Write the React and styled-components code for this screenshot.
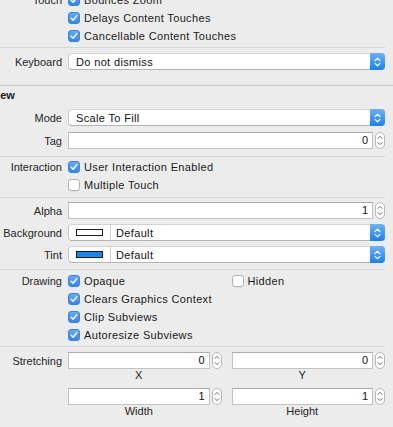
import React from 'react';
import styled, { createGlobalStyle } from 'styled-components';

const Global = createGlobalStyle`
  html, body { margin: 0; padding: 0; background: #ececec; overflow: hidden; }
  body {
    font-family: "Liberation Sans", Arial, sans-serif;
    font-size: 11px;
    color: #1f1f1f;
    -webkit-font-smoothing: antialiased;
  }
`;

const Panel = styled.div`
  width: 393px;
  margin-top: -9px;
  display: flex;
  flex-direction: column;
`;

const Row = styled.div`
  display: grid;
  grid-template-columns: 62px 1fr;
  column-gap: 6px;
  align-items: center;
  height: ${(p) => p.$h || 18}px;
  margin-top: ${(p) => p.$mt || 0}px;
  padding-right: 8px;
`;

const Label = styled.div`
  text-align: right;
  white-space: nowrap;
  color: #262626;
`;

const Divider = styled.div`
  height: 1px;
  background: ${(p) => (p.$full ? '#c9c9c9' : '#d6d6d6')};
  margin-top: ${(p) => p.$mt || 0}px;
  margin-right: ${(p) => (p.$full ? 0 : 8)}px;
`;

const Header = styled.div`
  height: 14px;
  line-height: 14px;
  margin-top: 2px;
  margin-left: -10px;
  font-weight: bold;
  color: #1a1a1a;
`;

const CheckWrap = styled.label`
  display: flex;
  align-items: center;
  gap: 4px;
  white-space: nowrap;
  color: #1a1a1a;
  letter-spacing: 0.35px;
`;

const Box = styled.span`
  width: 12px;
  height: 12px;
  box-sizing: border-box;
  border-radius: 3px;
  display: flex;
  align-items: center;
  justify-content: center;
  flex: none;
  background: ${(p) => (p.$on ? 'linear-gradient(#62aafb, #2f87f6)' : '#fff')};
  border: 1px solid ${(p) => (p.$on ? '#3a84e6' : '#b3b3b3')};
  box-shadow: ${(p) => (p.$on ? 'none' : '0 0.5px 0.5px rgba(0,0,0,0.08)')};
`;

const Check = ({ on, children }) => (
  <CheckWrap>
    <Box $on={on}>
      {on && (
        <svg width="10" height="10" viewBox="0 0 10 10">
          <path d="M2.2 5.2 L4.1 7.2 L7.8 2.6" fill="none" stroke="#fff" strokeWidth="1.5" strokeLinecap="round" strokeLinejoin="round" />
        </svg>
      )}
    </Box>
    <span>{children}</span>
  </CheckWrap>
);

const Popup = styled.div`
  height: 17px;
  box-sizing: border-box;
  background: #fff;
  border: 1px solid #c8c8c8;
  border-top-color: #d2d2d2;
  border-bottom-color: #b3b3b3;
  border-radius: 4px;
  display: flex;
  align-items: center;
  padding-left: ${(p) => (p.$color ? 0 : 7)}px;
  color: #111;
`;

const PopupArrows = styled.div`
  margin: -1px -1px -1px auto;
  width: 15px;
  align-self: stretch;
  background: linear-gradient(#6ab2fb, #1b7ff8);
  border-radius: 0 4px 4px 0;
  display: flex;
  align-items: center;
  justify-content: center;
`;

const Arrows = () => (
  <PopupArrows>
    <svg width="7" height="10" viewBox="0 0 7 10">
      <path d="M1 3.6 L3.5 1.2 L6 3.6 M1 6.4 L3.5 8.8 L6 6.4" fill="none" stroke="#fff" strokeWidth="1.2" strokeLinecap="round" strokeLinejoin="round" />
    </svg>
  </PopupArrows>
);

const Well = styled.div`
  width: 41px;
  align-self: stretch;
  border-right: 1px solid #cfcfcf;
  display: flex;
  align-items: center;
  justify-content: center;
`;

const Swatch = styled.span`
  width: 27px;
  height: 7px;
  box-sizing: border-box;
  border: 1px solid #1c1c1c;
  background: ${(p) => p.$c};
`;

const PopupText = styled.span`
  padding-left: ${(p) => (p.$pad ? 5 : 0)}px;
  letter-spacing: 0.35px;
`;

const NumField = styled.div`
  display: flex;
  gap: 2px;
  height: 17px;
`;

const NumBox = styled.div`
  flex: 1;
  box-sizing: border-box;
  border: 1px solid #c2c2c2;
  border-top-color: #ababab;
  background: #fff;
  text-align: right;
  padding-right: 4px;
  line-height: 15px;
  color: #111;
`;

const StepperBox = styled.div`
  width: 10px;
  flex: none;
  box-sizing: border-box;
  border: 1px solid #b8b8b8;
  border-radius: 5px;
  background: #fff;
  display: flex;
  align-items: center;
  justify-content: center;
`;

const Stepper = () => (
  <StepperBox>
    <svg width="6" height="11" viewBox="0 0 6 11">
      <path d="M1 3.4 L3 1.4 L5 3.4 M1 7.6 L3 9.6 L5 7.6" fill="none" stroke="#555" strokeWidth="0.9" strokeLinecap="round" strokeLinejoin="round" />
    </svg>
  </StepperBox>
);

const Number = ({ value }) => (
  <NumField>
    <NumBox>{value}</NumBox>
    <Stepper />
  </NumField>
);

const Pair = styled.div`
  display: grid;
  grid-template-columns: 1fr 1fr;
  column-gap: 10px;
  align-items: center;
`;

const SubLabel = styled.div`
  height: 12px;
  line-height: 12px;
  margin-right: 12px;
  text-align: center;
  color: #262626;
`;

export default function App() {
  return (
    <>
      <Global />
      <Panel>
        <Row><Label>Touch</Label><Check on>Bounces Zoom</Check></Row>
        <Row><Label /><Check on>Delays Content Touches</Check></Row>
        <Row><Label /><Check on>Cancellable Content Touches</Check></Row>
        <Divider $mt={2} />
        <Row $h={17} $mt={5}>
          <Label>Keyboard</Label>
          <Popup><PopupText>Do not dismiss</PopupText><Arrows /></Popup>
        </Row>
        <Divider $full $mt={15} />
        <Header>View</Header>
        <Row $h={17} $mt={7}>
          <Label>Mode</Label>
          <Popup><PopupText>Scale To Fill</PopupText><Arrows /></Popup>
        </Row>
        <Row $h={17} $mt={6}>
          <Label>Tag</Label>
          <Number value="0" />
        </Row>
        <Divider $mt={7} />
        <Row $mt={1}><Label>Interaction</Label><Check on>User Interaction Enabled</Check></Row>
        <Row><Label /><Check>Multiple Touch</Check></Row>
        <Divider $mt={3} />
        <Row $h={17} $mt={4}>
          <Label>Alpha</Label>
          <Number value="1" />
        </Row>
        <Row $h={17} $mt={5}>
          <Label>Background</Label>
          <Popup $color><Well><Swatch $c="#ffffff" /></Well><PopupText $pad>Default</PopupText><Arrows /></Popup>
        </Row>
        <Row $h={17} $mt={5}>
          <Label>Tint</Label>
          <Popup $color><Well><Swatch $c="#1a84f5" /></Well><PopupText $pad>Default</PopupText><Arrows /></Popup>
        </Row>
        <Divider $mt={6} />
        <Row $mt={2}>
          <Label>Drawing</Label>
          <Pair>
            <Check on>Opaque</Check>
            <Check>Hidden</Check>
          </Pair>
        </Row>
        <Row><Label /><Check on>Clears Graphics Context</Check></Row>
        <Row><Label /><Check on>Clip Subviews</Check></Row>
        <Row><Label /><Check on>Autoresize Subviews</Check></Row>
        <Divider $mt={2} />
        <Row $h={17} $mt={5}>
          <Label>Stretching</Label>
          <Pair><Number value="0" /><Number value="0" /></Pair>
        </Row>
        <Row $h={12}>
          <Label />
          <Pair><SubLabel>X</SubLabel><SubLabel>Y</SubLabel></Pair>
        </Row>
        <Row $h={17} $mt={7}>
          <Label />
          <Pair><Number value="1" /><Number value="1" /></Pair>
        </Row>
        <Row $h={12}>
          <Label />
          <Pair><SubLabel>Width</SubLabel><SubLabel>Height</SubLabel></Pair>
        </Row>
      </Panel>
    </>
  );
}
